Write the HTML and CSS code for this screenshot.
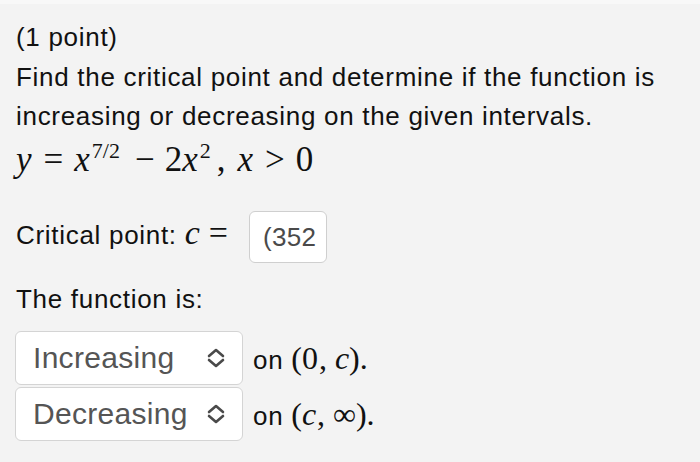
FILE: index.html
```html
<!DOCTYPE html>
<html>
<head>
<meta charset="utf-8">
<link rel="stylesheet" href="styles.css">
</head>
<body>
<div class="topband"></div>
<main class="problem">
  <div class="intro">
    <div>(1 point)</div>
    <div>Find the critical point and determine if the function is</div>
    <div>increasing or decreasing on the given intervals.</div>
    <div class="math eq"><i>y</i><span class="rel">=</span><i>x</i><sup>7/2</sup><span class="bin">−</span>2<i>x</i><sup>2</sup><span class="punct">,</span><i>x</i><span class="rel">&gt;</span>0</div>
  </div>
  <div class="critical">
    <span class="label">Critical point: <span class="math cm"><i>c</i><span class="rel">=</span></span></span>
    <span class="answer">(352</span>
  </div>
  <div class="fn">The function is:</div>
  <div class="selects">
    <div class="row">
      <div class="select"><span>Increasing</span>
        <svg class="chev" viewBox="0 0 22 20" width="22" height="20"><path d="M4 8 L11 2 L18 8 M4 12 L11 18 L18 12" fill="none" stroke="#4a4a4a" stroke-width="2.6" stroke-linecap="round" stroke-linejoin="round"/></svg>
      </div>
      <span class="on">on <span class="math">(0<span class="punct">,</span><i>c</i>).</span></span>
    </div>
    <div class="row">
      <div class="select"><span>Decreasing</span>
        <svg class="chev" viewBox="0 0 22 20" width="22" height="20"><path d="M4 8 L11 2 L18 8 M4 12 L11 18 L18 12" fill="none" stroke="#4a4a4a" stroke-width="2.6" stroke-linecap="round" stroke-linejoin="round"/></svg>
      </div>
      <span class="on">on <span class="math">(<i>c</i><span class="punct">,</span>∞).</span></span>
    </div>
  </div>
</main>
</body>
</html>
```
FILE: styles.css
```css
html, body {
  margin: 0;
  padding: 0;
  background: #f3f3f3;
}
body {
  width: 700px;
  height: 462px;
  overflow: hidden;
  font-family: "Liberation Sans", Arial, sans-serif;
  color: #111;
}
.topband {
  height: 4px;
  background: #f8f8f8;
}
.problem {
  padding-left: 16px;
  font-size: 26px;
  letter-spacing: 0.7px;
}
.intro {
  padding-top: 14px;
  line-height: 39.5px;
}
.math {
  font-family: "Liberation Serif", "Times New Roman", serif;
  font-size: 32px;
  letter-spacing: 0;
}
.math i {
  font-style: italic;
}
.eq {
  font-size: 35px;
  padding-top: 3px;
}
.eq sup {
  font-size: 22px;
  line-height: 0;
  vertical-align: 13px;
  margin-left: 2px;
}
.rel {
  margin: 0 9px;
}
.eq .rel {
  margin: 0 11px 0 12px;
}
.bin {
  margin: 0 10px 0 15px;
}
.punct {
  margin: 0 10px 0 2px;
}
.eq .punct {
  margin: 0 12px 0 6px;
}
.cm {
  font-size: 34px;
}
.critical {
  display: flex;
  align-items: flex-start;
  margin-top: 32px;
}
.label {
  margin-top: 2px;
  line-height: 39px;
  margin-right: 12px;
}
.answer {
  box-sizing: border-box;
  width: 78px;
  height: 52px;
  border: 1px solid #cfcfcf;
  border-radius: 6px;
  background: #fff;
  color: #4a4a4a;
  padding-left: 13px;
  line-height: 46px;
  padding-top: 2px;
  letter-spacing: 0.3px;
}
.fn {
  margin-top: 17px;
  line-height: 39px;
}
.selects {
  display: flex;
  flex-direction: column;
  gap: 2px;
  margin-top: 12px;
}
.row {
  display: flex;
  align-items: center;
}
.select {
  box-sizing: border-box;
  width: 228px;
  height: 54px;
  border: 1px solid #d4d4d4;
  border-radius: 6px;
  background: #fff;
  color: #555;
  font-size: 30px;
  letter-spacing: 0.3px;
  display: flex;
  align-items: center;
  justify-content: space-between;
  padding: 0 15px 0 17px;
  margin-left: -1px;
}
.chev {
  flex: none;
}
.on {
  margin-left: 10px;
}
.on .punct {
  margin: 0 8px 0 1px;
}
```
